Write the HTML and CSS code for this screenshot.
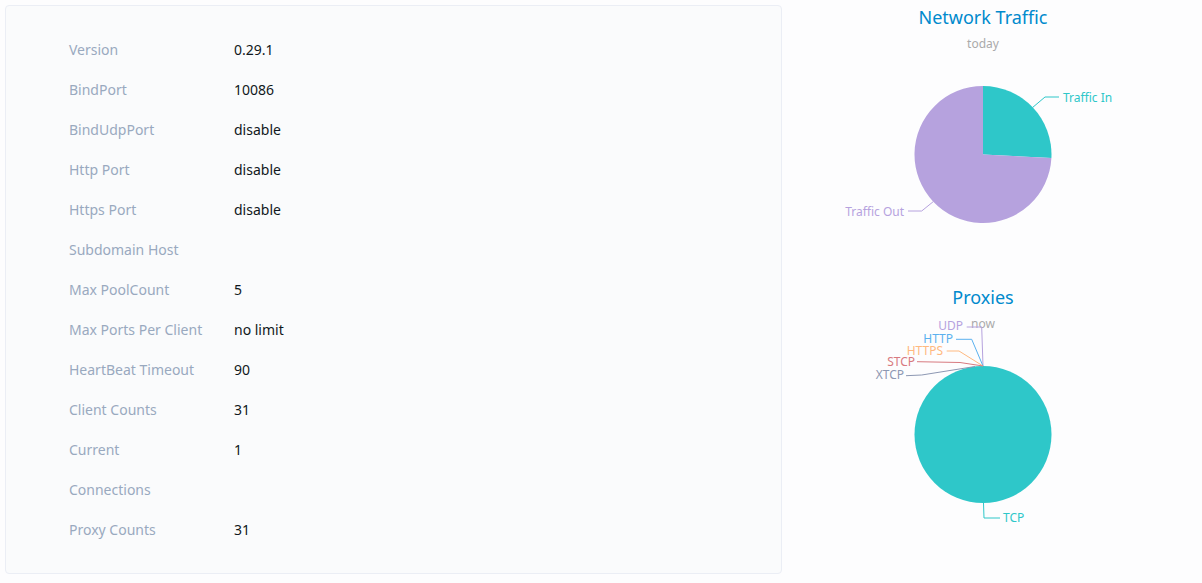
FILE: index.html
```html
<!DOCTYPE html>
<html>
<head>
<meta charset="utf-8">
<link rel="stylesheet" href="styles.css">
</head>
<body>
<div class="page">
  <div class="card">
    <div class="row"><div class="label">Version</div><div class="value">0.29.1</div></div>
    <div class="row"><div class="label">BindPort</div><div class="value">10086</div></div>
    <div class="row"><div class="label">BindUdpPort</div><div class="value">disable</div></div>
    <div class="row"><div class="label">Http Port</div><div class="value">disable</div></div>
    <div class="row"><div class="label">Https Port</div><div class="value">disable</div></div>
    <div class="row"><div class="label">Subdomain Host</div><div class="value"></div></div>
    <div class="row"><div class="label">Max PoolCount</div><div class="value">5</div></div>
    <div class="row"><div class="label">Max Ports Per Client</div><div class="value">no limit</div></div>
    <div class="row"><div class="label">HeartBeat Timeout</div><div class="value">90</div></div>
    <div class="row"><div class="label">Client Counts</div><div class="value">31</div></div>
    <div class="row"><div class="label"><span class="line">Current</span><span class="line">Connections</span></div><div class="value">1</div></div>
    <div class="row"><div class="label">Proxy Counts</div><div class="value">31</div></div>
  </div>
  <div class="charts">
    <svg class="chart chart-traffic" width="400" height="280" viewBox="0 0 400 280">
      <text class="title" x="200" y="24">Network Traffic</text>
      <text class="subtitle" x="200" y="48">today</text>
      <path d="M200,154.5 L200,86 A68.5,68.5 0 0 1 268.4,158.1 Z" fill="#2ec7c9"/>
      <path d="M200,154.5 L268.4,158.1 A68.5,68.5 0 1 1 200,86 Z" fill="#b6a2de"/>
      <polyline points="249.7,107.4 262,97 276,97" fill="none" stroke="#2ec7c9" stroke-width="1"/>
      <polyline points="150.3,201.6 138.7,211 125,211" fill="none" stroke="#b6a2de" stroke-width="1"/>
      <text class="lbl" x="280" y="101.5" fill="#2ec7c9">Traffic In</text>
      <text class="lbl end" x="121" y="215.5" fill="#b6a2de">Traffic Out</text>
    </svg>
    <svg class="chart chart-proxies" width="400" height="303" viewBox="0 0 400 303">
      <text class="title" x="200" y="24">Proxies</text>
      <text class="subtitle" x="200" y="48">now</text>
      <circle cx="200" cy="154.5" r="68.5" fill="#2ec7c9"/>
      <polyline points="183.7,47 198.7,47 200,86" fill="none" stroke="#b6a2de"/>
      <polyline points="173,59.3 188.7,59.3 200,86" fill="none" stroke="#5ab1ef"/>
      <polyline points="163.7,71 176,71 200,86" fill="none" stroke="#ffb980"/>
      <polyline points="134,81.7 177,82.5 200,86" fill="none" stroke="#d87a80"/>
      <polyline points="123,95.7 138.7,95 192,86.5" fill="none" stroke="#8d98b3"/>
      <polyline points="200.5,223 201,238 217,238" fill="none" stroke="#2ec7c9"/>
      <text class="lbl end" x="180" y="50" fill="#b6a2de">UDP</text>
      <text class="lbl end" x="170" y="63" fill="#5ab1ef">HTTP</text>
      <text class="lbl end" x="160" y="75" fill="#ffb980">HTTPS</text>
      <text class="lbl end" x="132" y="86" fill="#d87a80">STCP</text>
      <text class="lbl end" x="121" y="99" fill="#8d98b3">XTCP</text>
      <text class="lbl" x="220" y="242" fill="#2ec7c9">TCP</text>
    </svg>
  </div>
</div>
</body>
</html>
```

FILE: styles.css
```css
html, body {
  margin: 0;
  padding: 0;
  background: #fdfdfe;
  font-family: "Noto Sans", "Open Sans", sans-serif;
}

.page {
  display: flex;
  align-items: flex-start;
}

.card {
  box-sizing: border-box;
  width: 777px;
  height: 569px;
  margin: 5px 1px 0 5px;
  border: 1px solid #ebeef5;
  border-radius: 4px;
  background: #fafbfc;
  padding: 24px 0 0 63px;
}

.row {
  display: flex;
  font-size: 14px;
}

.label {
  width: 165px;
  color: #99a9bf;
  line-height: 40px;
}

.label .line {
  display: block;
}

.value {
  color: #101820;
  line-height: 40px;
}

.charts {
  display: flex;
  flex-direction: column;
  width: 400px;
}

.chart {
  display: block;
}

.chart .title {
  font-size: 18px;
  fill: #008acd;
  text-anchor: middle;
}

.chart .subtitle {
  font-size: 12px;
  fill: #aaaaaa;
  text-anchor: middle;
}

.chart .lbl {
  font-size: 12px;
}

.chart .end {
  text-anchor: end;
}
```
